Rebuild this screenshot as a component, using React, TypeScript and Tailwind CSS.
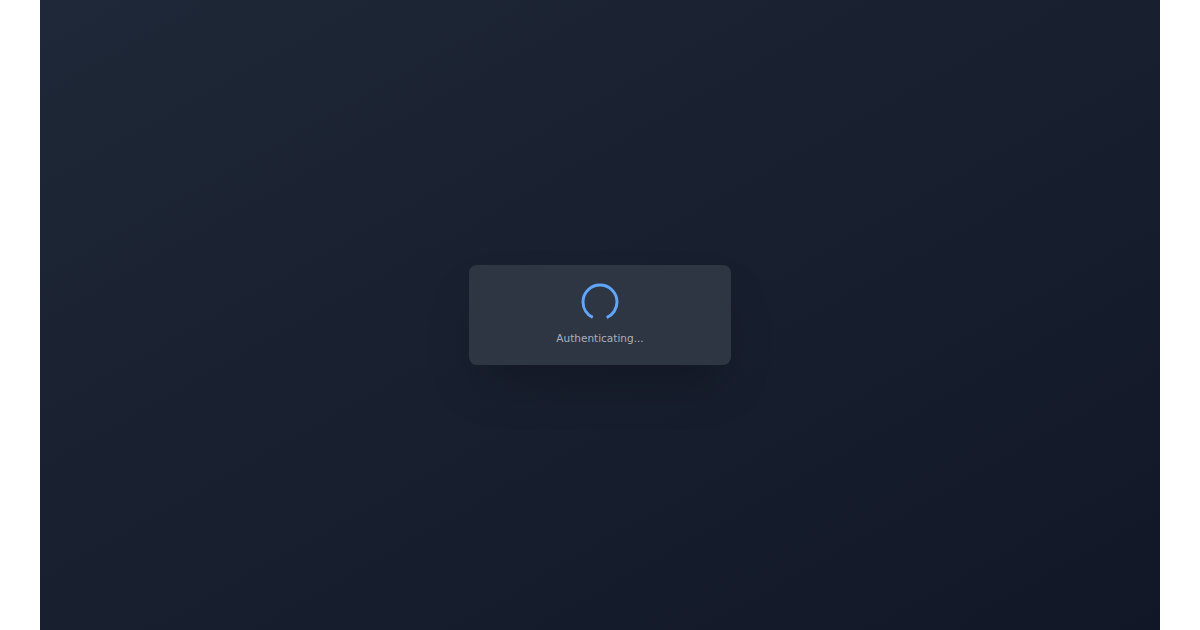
import React from 'react';

const Spinner: React.FC = () => (
  <svg width="40" height="40" viewBox="0 0 40 40">
    <circle
      cx="20"
      cy="20"
      r="17"
      fill="none"
      stroke="#60a5fa"
      strokeWidth="3"
      strokeDasharray="92.5 14.3"
      strokeDashoffset="-34"
    />
  </svg>
);

export default function App() {
  return (
    <div className="min-h-screen w-full bg-white flex justify-center" style={{ fontFamily: '"DejaVu Sans", sans-serif' }}>
      <div className="w-[1120px] h-[630px] bg-gradient-to-br from-[#1f2838] to-[#111726] flex items-center justify-center">
        <div className="w-[262px] h-[100px] rounded-lg bg-[#2e3643] shadow-2xl flex flex-col items-center pt-[17px]">
          <Spinner />
          <p className="mt-[8px] text-[10.5px] leading-4 text-[#aab0ba]">Authenticating...</p>
        </div>
      </div>
    </div>
  );
}
